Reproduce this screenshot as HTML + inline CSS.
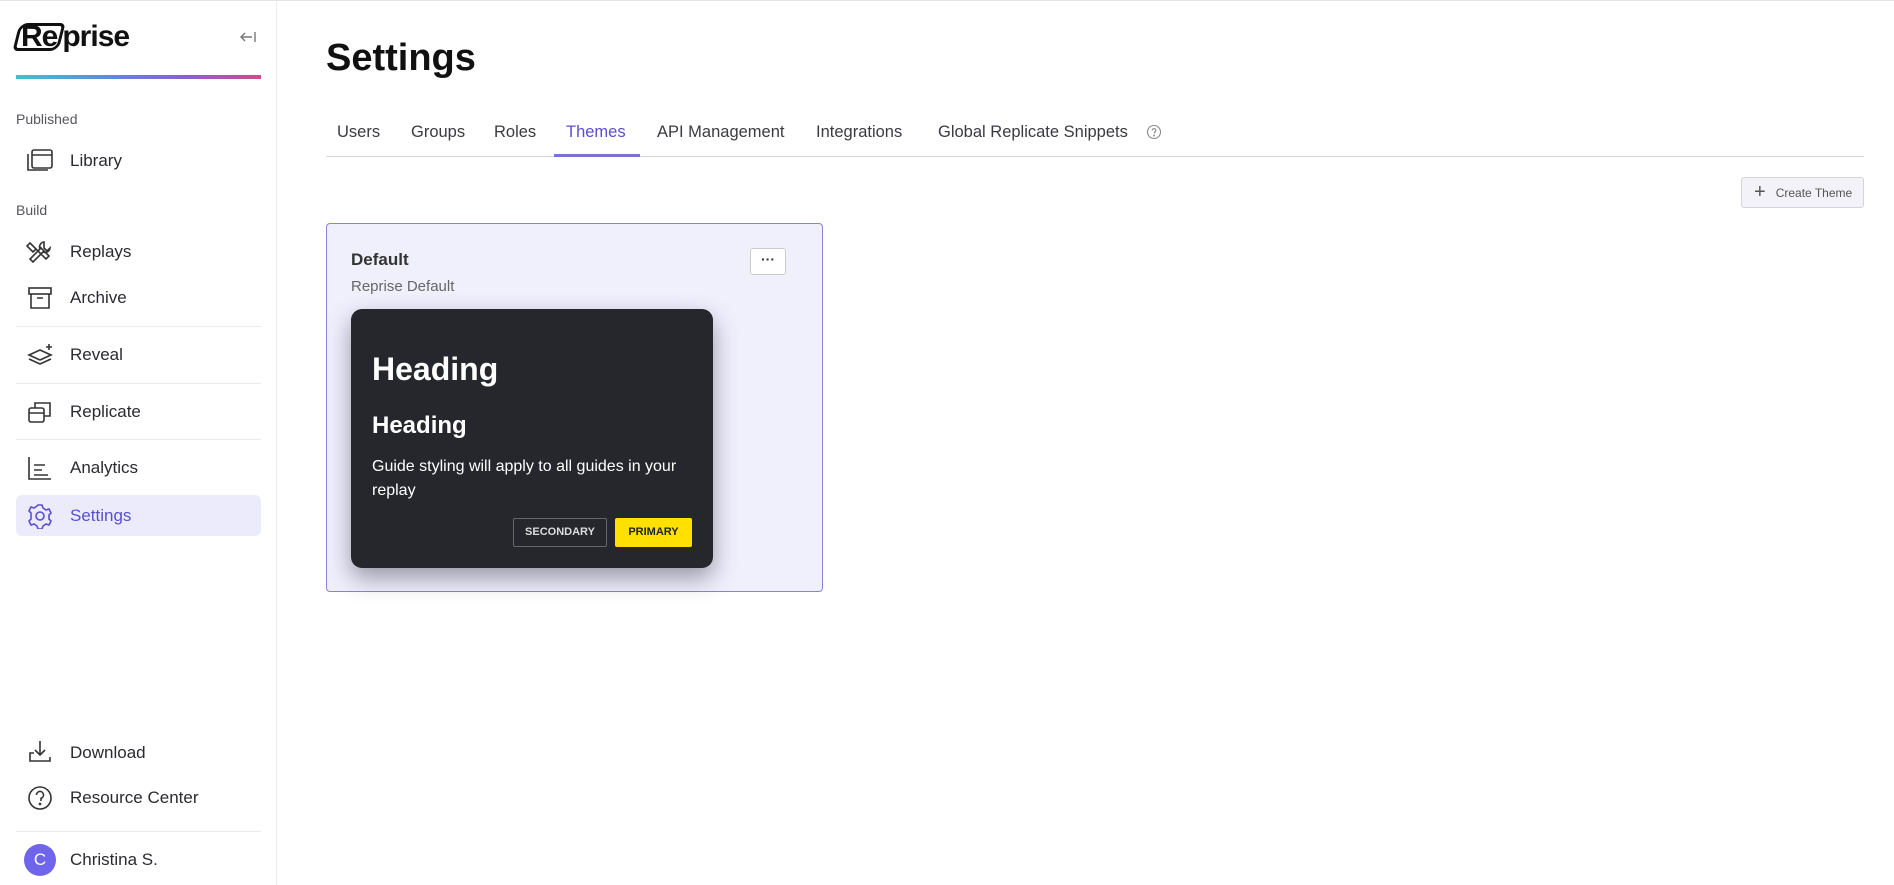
<!DOCTYPE html>
<html><head><meta charset="utf-8"><style>
*{box-sizing:border-box;margin:0;padding:0}
body{width:1894px;height:884px;background:#fff;font-family:"Liberation Sans",sans-serif;position:relative;overflow:hidden;color:#1f1f24;border-top:1px solid #e5e5e8}
.abs{position:absolute}
.side{left:0;top:0;width:277px;height:884px;border-right:1px solid #ececef}
.lbl{left:16px;font-size:14px;color:#55555c}
.item{left:16px;width:245px;height:40px;display:flex;align-items:center;font-size:17px;color:#2a2a30}
.item svg{margin-left:10px;margin-right:16px;flex:none}
.div{left:16px;width:245px;height:1px;background:#ececef}
.tab{top:122px;font-size:16.5px;color:#3a3a40}
</style></head><body>
<div class="abs side">
  <div class="abs" style="left:16px;top:19px;font-size:30px;font-weight:bold;letter-spacing:-1px;color:#111;display:flex;align-items:center">
    <span style="position:relative;display:inline-block;padding:0 5px;line-height:28px"><span style="position:absolute;left:0;top:0;right:0;bottom:0;border:3px solid #111;border-radius:9px 5px 9px 5px;transform:skewX(-14deg)"></span>Re</span>prise</div>
  <svg class="abs" style="left:237px;top:25px" width="22" height="22" viewBox="0 0 22 22" fill="none" stroke="#777" stroke-width="1.4"><path d="M4 11h11M8 7l-4 4 4 4M18 6v10"/></svg>
  <div class="abs" style="left:16px;top:74px;width:245px;height:4px;background:linear-gradient(90deg,#3bc6c9,#6a7de0 45%,#8a5fd0 70%,#cf4c8a)"></div>
  <div class="abs lbl" style="top:110px">Published</div>
  <div class="abs item" style="top:140px"><svg width="28" height="26" viewBox="0 0 28 26" fill="none" stroke="#333" stroke-width="1.6"><rect x="6" y="2" width="20" height="18" rx="2"/><path d="M6 7h20M2 6v16h20"/></svg>Library</div>
  <div class="abs lbl" style="top:201px">Build</div>
  <div class="abs item" style="top:231px"><svg width="28" height="26" viewBox="0 0 28 26" fill="none" stroke="#333" stroke-width="1.6"><path d="M4 4l6 6-3 3-6-6zM10 10l10 10 3-3-10-10M18 3a5 5 0 0 0-4 7L4 20l3 3 10-10a5 5 0 0 0 7-4l-3 3-3-3z"/></svg>Replays</div>
  <div class="abs item" style="top:277px"><svg width="28" height="26" viewBox="0 0 28 26" fill="none" stroke="#333" stroke-width="1.6"><rect x="3" y="3" width="22" height="6"/><path d="M5 9v14h18V9M11 13h6"/></svg>Archive</div>
  <div class="abs div" style="top:325px"></div>
  <div class="abs item" style="top:334px"><svg width="28" height="26" viewBox="0 0 28 26" fill="none" stroke="#333" stroke-width="1.6"><path d="M14 8l11 5-11 5-11-5zM3 17l11 5 11-5M23 2v6M20 5h6"/></svg>Reveal</div>
  <div class="abs div" style="top:382px"></div>
  <div class="abs item" style="top:391px"><svg width="28" height="26" viewBox="0 0 28 26" fill="none" stroke="#333" stroke-width="1.6"><rect x="3" y="9" width="15" height="14" rx="2"/><path d="M3 14h15M9 9V4h15v13h-6"/></svg>Replicate</div>
  <div class="abs div" style="top:438px"></div>
  <div class="abs item" style="top:447px"><svg width="28" height="26" viewBox="0 0 28 26" fill="none" stroke="#333" stroke-width="1.6"><path d="M3 2v22h22M8 10h11M8 15h8M8 20h14"/></svg>Analytics</div>
  <div class="abs item" style="top:494px;height:41px;background:#ebebfb;border-radius:6px;color:#5a4fd0"><svg width="28" height="26" viewBox="0 0 28 26" fill="none" stroke="#5a4fd0" stroke-width="1.6"><circle cx="14" cy="13" r="4"/><path d="M12 2h4l1 3 3 2 3-1 2 4-2 2v4l2 2-2 4-3-1-3 2-1 3h-4l-1-3-3-2-3 1-2-4 2-2V10L3 8l2-4 3 1 3-2z"/></svg>Settings</div>
  <div class="abs item" style="top:732px"><svg width="28" height="26" viewBox="0 0 28 26" fill="none" stroke="#333" stroke-width="1.6"><path d="M14 1v14M9 10l5 5 5-5M8 13H4v8h20v-4"/></svg>Download</div>
  <div class="abs item" style="top:777px"><svg width="28" height="28" viewBox="0 0 28 28" fill="none" stroke="#333" stroke-width="1.6"><circle cx="14" cy="14" r="11"/><path d="M10.5 11a3.5 3.5 0 1 1 4.5 3.3V17"/><circle cx="14" cy="20" r=".6"/></svg>Resource Center</div>
  <div class="abs div" style="top:830px"></div>
  <div class="abs item" style="top:839px"><span style="width:32px;height:32px;border-radius:50%;background:#6f65ec;color:#fff;display:flex;align-items:center;justify-content:center;font-size:17px;margin:0 14px 0 8px">C</span>Christina S.</div>
</div>
<div class="abs" style="left:326px;top:36px;font-size:38px;font-weight:bold;color:#111">Settings</div>
<div class="abs tab" style="left:337px">Users</div>
<div class="abs tab" style="left:411px">Groups</div>
<div class="abs tab" style="left:494px">Roles</div>
<div class="abs tab" style="left:566px;color:#5a4fd0">Themes</div>
<div class="abs tab" style="left:657px">API Management</div>
<div class="abs tab" style="left:816px">Integrations</div>
<div class="abs tab" style="left:938px">Global Replicate Snippets</div>
<svg class="abs" style="left:1146px;top:123px" width="16" height="16" viewBox="0 0 16 16" fill="none" stroke="#888" stroke-width="1.1"><circle cx="8" cy="8" r="6.5"/><path d="M6.2 6.5a1.8 1.8 0 1 1 2.3 1.7V9.5"/><circle cx="8" cy="11.5" r=".4"/></svg>
<div class="abs" style="left:326px;top:155px;width:1538px;height:1px;background:#d6d6da"></div>
<div class="abs" style="left:554px;top:153px;width:86px;height:3px;background:#7b6fe0"></div>
<div class="abs" style="left:1741px;top:176px;width:123px;height:31px;border:1px solid #d3d3dc;border-radius:3px;background:#f2f2f8;font-size:12px;color:#555;display:flex;align-items:center;padding-left:12px"><span style="font-size:20px;margin-right:10px;font-weight:300">+</span>Create Theme</div>
<div class="abs" style="left:326px;top:222px;width:497px;height:369px;border:1px solid #8a80df;border-radius:4px;background:#f0f0fd"></div>
<div class="abs" style="left:351px;top:249px;font-size:17px;font-weight:bold;color:#333">Default</div>
<div class="abs" style="left:351px;top:277px;font-size:15px;color:#666">Reprise Default</div>
<div class="abs" style="left:750px;top:247px;width:36px;height:27px;border:1px solid #ccc;border-radius:3px;background:#fff;text-align:center;font-size:14px;line-height:20px;color:#333;font-weight:bold">···</div>
<div class="abs" style="left:351px;top:308px;width:362px;height:259px;background:#26272d;border-radius:11px;box-shadow:0 10px 24px rgba(40,40,60,.45);color:#fff">
  <div class="abs" style="left:21px;top:42px;font-size:32px;font-weight:bold">Heading</div>
  <div class="abs" style="left:21px;top:103px;font-size:24px;font-weight:bold">Heading</div>
  <div class="abs" style="left:21px;top:146px;font-size:16px;line-height:24px;width:330px">Guide styling will apply to all guides in your replay</div>
  <div class="abs" style="left:162px;top:209px;width:94px;height:29px;border:1.5px solid #666;border-radius:2px;font-size:11px;font-weight:bold;color:#ddd;text-align:center;line-height:26px">SECONDARY</div>
  <div class="abs" style="left:264px;top:209px;width:77px;height:29px;background:#ffe000;border-radius:2px;font-size:11px;font-weight:bold;color:#222;text-align:center;line-height:29px">PRIMARY</div>
</div>
</body></html>
